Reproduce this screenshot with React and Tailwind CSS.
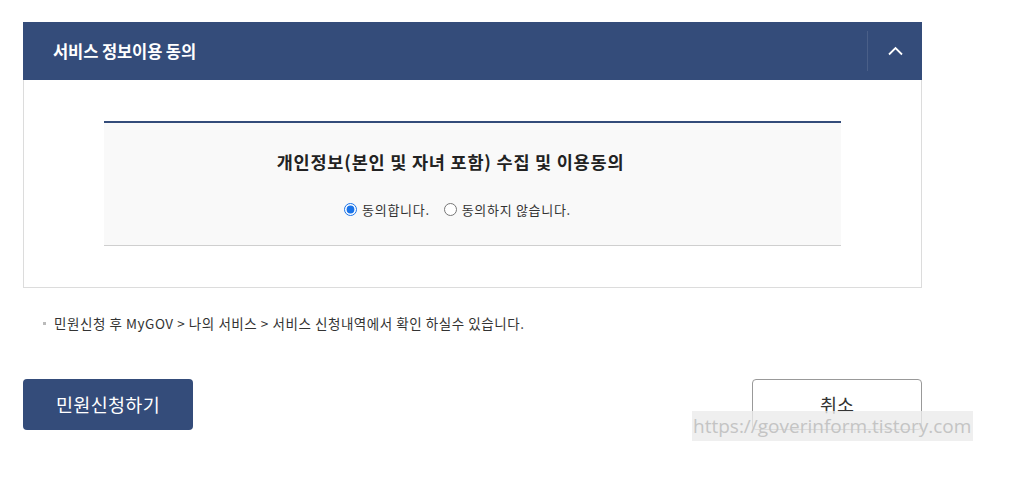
import React from 'react';

const font = { fontFamily: '"Noto Sans CJK KR", "Noto Sans", sans-serif' };

export default function App() {
  return (
    <div className="relative w-[1013px] h-[481px] bg-white text-[#333]" style={font}>
      <div className="pt-[22px] pl-[23px] w-[922px]">
        {/* header */}
        <div className="flex items-center h-[58px] bg-[#344c7a] text-white">
          <h2 className="flex-1 pl-[30px] text-[16.5px] font-bold tracking-[-0.1px]">서비스 정보이용 동의</h2>
          <div className="w-px h-[40px] bg-[#4a5f88]"></div>
          <button className="flex items-center justify-center w-[54px] h-full">
            <svg width="15" height="10" viewBox="0 0 15 10" fill="none">
              <path d="M1 8.5L7.5 2L14 8.5" stroke="white" strokeWidth="1.8" />
            </svg>
          </button>
        </div>
        {/* body */}
        <div className="border border-t-0 border-[#dcdcdc] h-[208px] pt-[41px] px-[80px]">
          <div className="border-t-2 border-[#344c7a] border-b border-b-[#cfcfcf] bg-[#f9f9f9] h-[125px] flex flex-col items-center">
            <h3 className="mt-[27px] mr-[44px] text-[17.5px] leading-[24px] font-bold text-[#222] tracking-[0.8px]">개인정보(본인 및 자녀 포함) 수집 및 이용동의</h3>
            <div className="mt-[26px] mr-[30px] flex items-center gap-[14px] text-[13px] text-[#333] tracking-[0.7px]">
              <label className="flex items-center gap-[5px]">
                <input type="radio" name="agree" defaultChecked className="w-[13px] h-[13px] m-0 accent-[#1a73e8]" />
                <span>동의합니다.</span>
              </label>
              <label className="flex items-center gap-[5px]">
                <input type="radio" name="agree" className="w-[13px] h-[13px] m-0" />
                <span>동의하지 않습니다.</span>
              </label>
            </div>
          </div>
        </div>
        {/* note */}
        <p className="mt-[25px] pl-[20px] flex items-center text-[13.5px] text-[#333] tracking-[0.55px]">
          <span className="w-[3px] h-[3px] bg-[#bbb] mr-[8px]"></span>
          민원신청 후 MyGOV &gt; 나의 서비스 &gt; 서비스 신청내역에서 확인 하실수 있습니다.
        </p>
        {/* buttons */}
        <div className="mt-[46px] flex justify-between">
          <button className="w-[170px] h-[51px] rounded-[4px] bg-[#344c7a] text-white text-[18.5px] tracking-[0.3px]">민원신청하기</button>
          <button className="w-[170px] h-[51px] rounded-[4px] border border-[#999] bg-white text-[#333] text-[18.5px]">취소</button>
        </div>
      </div>
      {/* watermark */}
      <div className="absolute left-[692px] top-[411px] w-[281px] h-[30px] bg-[#ebebeb]/80 text-[#c4c4c4] text-[19px] leading-[30px] pl-[1px]" style={{ fontFamily: '"Open Sans", sans-serif' }}>
        https://goverinform.tistory.com
      </div>
    </div>
  );
}
